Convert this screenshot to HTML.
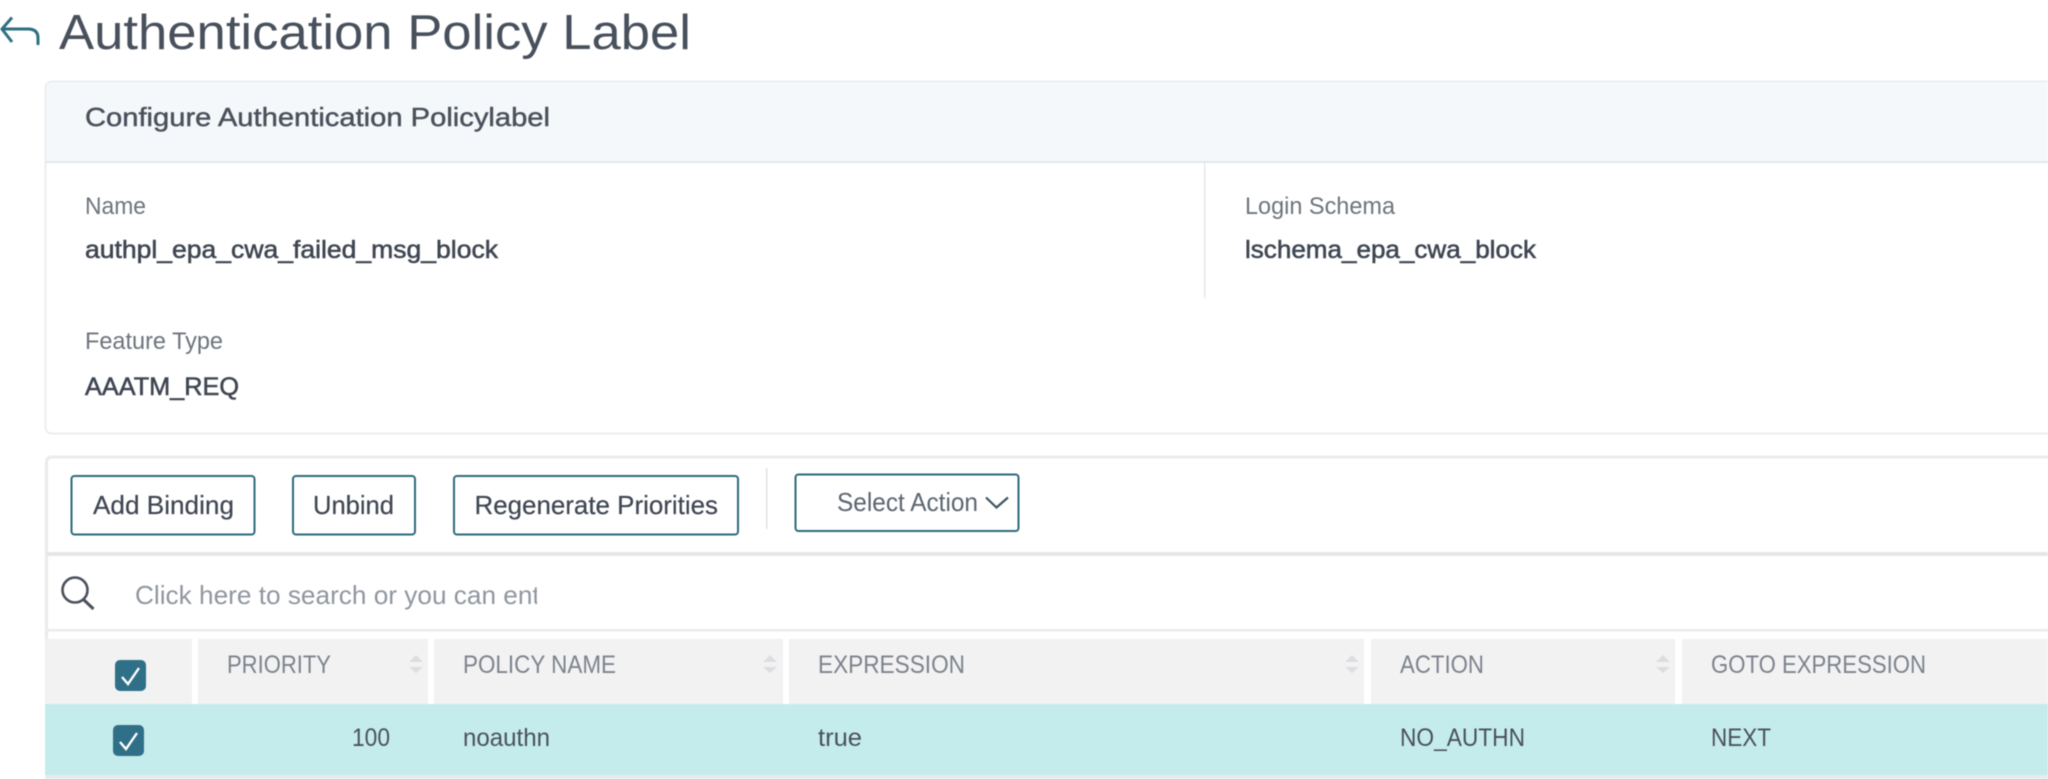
<!DOCTYPE html>
<html lang="en">
<head>
<meta charset="utf-8">
<title>Authentication Policy Label</title>
<style>
html,body{margin:0;padding:0;background:#fff;width:2048px;height:779px;overflow:hidden}
svg{display:block;filter:blur(.5px)}
text{font-family:"Liberation Sans",sans-serif;white-space:pre}
.t{font-size:49px;fill:#47505c}
.h{font-size:26px;fill:#4a515c;stroke:#4a515c;stroke-width:.45px}
.l{font-size:24px;fill:#6d747d}
.v{font-size:25px;fill:#3f4652;stroke:#3f4652;stroke-width:.55px}
.b{font-size:26px;fill:#3f4652;stroke:#3f4652;stroke-width:.2px}
.p{font-size:26px;fill:#9096a0}
.c{font-size:25px;fill:#7d838c}
.r{font-size:25px;fill:#4a515c}
.s{fill:#dcdde0}
</style>
</head>
<body>
<svg width="2048" height="779" viewBox="0 0 2048 779" xmlns="http://www.w3.org/2000/svg">
<defs><clipPath id="pc"><rect x="130" y="575" width="407" height="40"/></clipPath></defs>
<rect width="2048" height="779" fill="#fff"/>

<path d="M12 17.500L2 29L12 42M2 29H28Q38 29 38 38V45" fill="none" stroke="#2f6f82" stroke-width="3"/>
<text class="t" x="59" y="49" textLength="632" lengthAdjust="spacingAndGlyphs">Authentication Policy Label</text>

<rect x="45.500" y="81.500" width="2040" height="352" rx="6" fill="#fff" stroke="#e6e9ec" stroke-width="1.500"/>
<path d="M46 162V88Q46 82 52 82H2048V162Z" fill="#f5f8fa"/>
<rect x="46" y="161" width="2002" height="2" fill="#e3e8ec"/>
<rect x="1204" y="162" width="1.500" height="136" fill="#e6e8eb"/>
<text class="h" x="85" y="126" textLength="465" lengthAdjust="spacingAndGlyphs">Configure Authentication Policylabel</text>
<text class="l" x="85" y="214" textLength="61" lengthAdjust="spacingAndGlyphs">Name</text>
<text class="v" x="85" y="258" textLength="413" lengthAdjust="spacingAndGlyphs">authpl_epa_cwa_failed_msg_block</text>
<text class="l" x="1245" y="214" textLength="150" lengthAdjust="spacingAndGlyphs">Login Schema</text>
<text class="v" x="1245" y="258" textLength="291" lengthAdjust="spacingAndGlyphs">lschema_epa_cwa_block</text>
<text class="l" x="85" y="349" textLength="138" lengthAdjust="spacingAndGlyphs">Feature Type</text>
<text class="v" x="85" y="395" textLength="154" lengthAdjust="spacingAndGlyphs">AAATM_REQ</text>

<path d="M46.500 779V463Q46.500 457 52 457H2048" fill="none" stroke="#e9ebed" stroke-width="3"/>
<rect x="71.500" y="476" width="183" height="58.500" rx="3" fill="#fff" stroke="#2d6a7d" stroke-width="2"/>
<text class="b" x="93" y="514" textLength="141" lengthAdjust="spacingAndGlyphs">Add Binding</text>
<rect x="293" y="476" width="122" height="58.500" rx="3" fill="#fff" stroke="#2d6a7d" stroke-width="2"/>
<text class="b" x="313" y="514" textLength="81" lengthAdjust="spacingAndGlyphs">Unbind</text>
<rect x="454" y="476" width="284" height="58.500" rx="3" fill="#fff" stroke="#2d6a7d" stroke-width="2"/>
<text class="b" x="474.500" y="514" textLength="243.500" lengthAdjust="spacingAndGlyphs">Regenerate Priorities</text>
<rect x="766" y="468" width="1.500" height="61" fill="#dfe2e5"/>
<rect x="795.500" y="474.500" width="223" height="56.500" rx="3" fill="#fff" stroke="#2d6a7d" stroke-width="2"/>
<text class="b" x="837" y="511" textLength="141" lengthAdjust="spacingAndGlyphs" style="fill:#5b6570;stroke:none">Select Action</text>
<path d="M986 497.500L996.500 507.500L1008 497.500" fill="none" stroke="#3c5563" stroke-width="2.200"/>

<rect x="47" y="552" width="2001" height="4" fill="#e4e7e9"/>
<circle cx="75" cy="590" r="12.500" fill="none" stroke="#4a515c" stroke-width="2.600"/>
<path d="M84 600L93.500 609" stroke="#4a515c" stroke-width="3" fill="none"/>
<text class="p" x="135" y="604" textLength="428" lengthAdjust="spacingAndGlyphs" clip-path="url(#pc)">Click here to search or you can enter</text>
<rect x="47" y="629" width="2001" height="2.500" fill="#e9ebed"/>

<rect x="45" y="639" width="147" height="65" fill="#f2f2f3"/>
<rect x="198" y="639" width="230" height="65" fill="#f2f2f3"/>
<rect x="434" y="639" width="349" height="65" fill="#f2f2f3"/>
<rect x="789" y="639" width="575" height="65" fill="#f2f2f3"/>
<rect x="1371" y="639" width="304" height="65" fill="#f2f2f3"/>
<rect x="1682" y="639" width="366" height="65" fill="#f2f2f3"/>
<rect x="45" y="704" width="2003" height="71" fill="#c5ecec"/>
<rect x="45" y="775" width="2003" height="4" fill="#e4ecee"/>

<text class="c" x="227" y="673" textLength="104" lengthAdjust="spacingAndGlyphs">PRIORITY</text>
<text class="c" x="463" y="673" textLength="153" lengthAdjust="spacingAndGlyphs">POLICY NAME</text>
<text class="c" x="818" y="673" textLength="147" lengthAdjust="spacingAndGlyphs">EXPRESSION</text>
<text class="c" x="1400" y="673" textLength="84" lengthAdjust="spacingAndGlyphs">ACTION</text>
<text class="c" x="1711" y="673" textLength="215" lengthAdjust="spacingAndGlyphs">GOTO EXPRESSION</text>

<path class="s" d="M416 655L423 662H409ZM416 673L423 667H409Z"/>
<path class="s" d="M770 655L777 662H763ZM770 673L777 667H763Z"/>
<path class="s" d="M1352 655L1359 662H1345ZM1352 673L1359 667H1345Z"/>
<path class="s" d="M1663 655L1670 662H1656ZM1663 673L1670 667H1656Z"/>

<rect x="115" y="660" width="31" height="31" rx="5" fill="#2f6f87"/>
<path d="M122 677L128 684L139 668" fill="none" stroke="#fff" stroke-width="2.400"/>
<rect x="113" y="725" width="31" height="31" rx="5" fill="#2f6f87"/>
<path d="M120 742L126 749L137 733" fill="none" stroke="#fff" stroke-width="2.400"/>

<text class="r" x="352" y="746" textLength="38" lengthAdjust="spacingAndGlyphs">100</text>
<text class="r" x="463" y="746" textLength="87" lengthAdjust="spacingAndGlyphs">noauthn</text>
<text class="r" x="818" y="746" textLength="44" lengthAdjust="spacingAndGlyphs">true</text>
<text class="r" x="1400" y="746" textLength="125" lengthAdjust="spacingAndGlyphs">NO_AUTHN</text>
<text class="r" x="1711" y="746" textLength="60" lengthAdjust="spacingAndGlyphs">NEXT</text>
</svg>
</body>
</html>
